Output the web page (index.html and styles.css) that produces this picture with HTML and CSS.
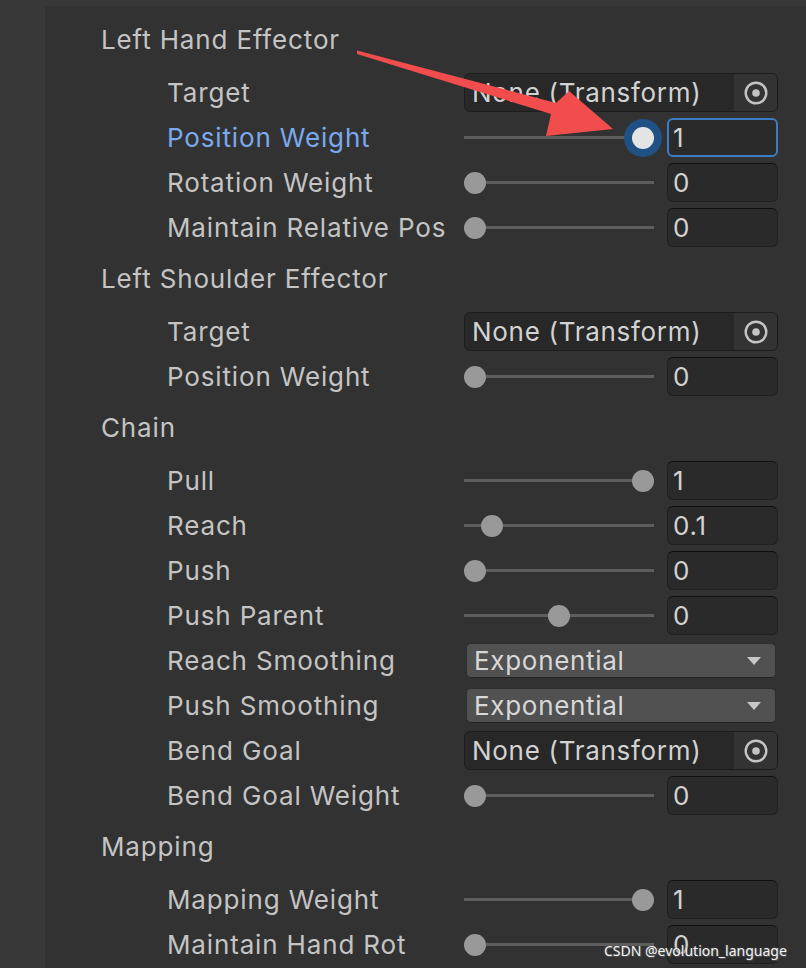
FILE: index.html
```html
<!DOCTYPE html>
<html>
<head>
<meta charset="utf-8">
<link rel="stylesheet" href="styles.css">
</head>
<body>
<div class="panel">
  <div class="section">
    <div class="header">Left Hand Effector</div>
    <div class="row">
      <div class="label">Target</div>
      <div class="objfield"><span class="objtext">None (Transform)</span><span class="objbtn"><svg width="24" height="24" viewBox="0 0 24 24"><circle cx="12" cy="12" r="10.3" fill="none" stroke="#c4c4c4" stroke-width="2.4"/><circle cx="12" cy="12" r="3.8" fill="#c4c4c4"/></svg></span></div>
    </div>
    <div class="row">
      <div class="label active">Position Weight</div>
      <div class="sliderfield"><div class="slider"><div class="track"></div><div class="knob focused" style="--v:1"></div></div><div class="numfield focused">1</div></div>
    </div>
    <div class="row">
      <div class="label">Rotation Weight</div>
      <div class="sliderfield"><div class="slider"><div class="track"></div><div class="knob" style="--v:0"></div></div><div class="numfield">0</div></div>
    </div>
    <div class="row">
      <div class="label">Maintain Relative Pos</div>
      <div class="sliderfield"><div class="slider"><div class="track"></div><div class="knob" style="--v:0"></div></div><div class="numfield">0</div></div>
    </div>
  </div>
  <div class="section">
    <div class="header">Left Shoulder Effector</div>
    <div class="row">
      <div class="label">Target</div>
      <div class="objfield"><span class="objtext">None (Transform)</span><span class="objbtn"><svg width="24" height="24" viewBox="0 0 24 24"><circle cx="12" cy="12" r="10.3" fill="none" stroke="#c4c4c4" stroke-width="2.4"/><circle cx="12" cy="12" r="3.8" fill="#c4c4c4"/></svg></span></div>
    </div>
    <div class="row">
      <div class="label">Position Weight</div>
      <div class="sliderfield"><div class="slider"><div class="track"></div><div class="knob" style="--v:0"></div></div><div class="numfield">0</div></div>
    </div>
  </div>
  <div class="section">
    <div class="header">Chain</div>
    <div class="row">
      <div class="label">Pull</div>
      <div class="sliderfield"><div class="slider"><div class="track"></div><div class="knob" style="--v:1"></div></div><div class="numfield">1</div></div>
    </div>
    <div class="row">
      <div class="label">Reach</div>
      <div class="sliderfield"><div class="slider"><div class="track"></div><div class="knob" style="--v:0.1"></div></div><div class="numfield">0.1</div></div>
    </div>
    <div class="row">
      <div class="label">Push</div>
      <div class="sliderfield"><div class="slider"><div class="track"></div><div class="knob" style="--v:0"></div></div><div class="numfield">0</div></div>
    </div>
    <div class="row">
      <div class="label">Push Parent</div>
      <div class="sliderfield"><div class="slider"><div class="track"></div><div class="knob" style="--v:0.5"></div></div><div class="numfield">0</div></div>
    </div>
    <div class="row">
      <div class="label">Reach Smoothing</div>
      <div class="dropdown"><span>Exponential</span><span class="caret"></span></div>
    </div>
    <div class="row">
      <div class="label">Push Smoothing</div>
      <div class="dropdown"><span>Exponential</span><span class="caret"></span></div>
    </div>
    <div class="row">
      <div class="label">Bend Goal</div>
      <div class="objfield"><span class="objtext">None (Transform)</span><span class="objbtn"><svg width="24" height="24" viewBox="0 0 24 24"><circle cx="12" cy="12" r="10.3" fill="none" stroke="#c4c4c4" stroke-width="2.4"/><circle cx="12" cy="12" r="3.8" fill="#c4c4c4"/></svg></span></div>
    </div>
    <div class="row">
      <div class="label">Bend Goal Weight</div>
      <div class="sliderfield"><div class="slider"><div class="track"></div><div class="knob" style="--v:0"></div></div><div class="numfield">0</div></div>
    </div>
  </div>
  <div class="section">
    <div class="header">Mapping</div>
    <div class="row">
      <div class="label">Mapping Weight</div>
      <div class="sliderfield"><div class="slider"><div class="track"></div><div class="knob" style="--v:1"></div></div><div class="numfield">1</div></div>
    </div>
    <div class="row">
      <div class="label">Maintain Hand Rot</div>
      <div class="sliderfield"><div class="slider"><div class="track"></div><div class="knob" style="--v:0"></div></div><div class="numfield">0</div></div>
    </div>
  </div>
</div>
<svg class="annotation" width="806" height="968" viewBox="0 0 806 968">
  <polygon points="357,50.5 556,103 569,91 613,129 546,136 551,114 357,54" fill="#f24d4d"/>
</svg>
<div class="watermark">CSDN @evolution_language</div>
</body>
</html>
```

FILE: styles.css
```css
html, body {
  margin: 0;
  padding: 0;
}
body {
  width: 806px;
  height: 968px;
  overflow: hidden;
  background: #383838;
  font-family: Inter, "Noto Sans", sans-serif;
  position: relative;
}
.panel {
  margin: 6px 0 0 45px;
  height: 962px;
  background: #323232;
  padding: 5px 28px 0 56px;
  box-sizing: border-box;
}
.header {
  height: 45px;
  line-height: 45px;
  margin: 6px 0 8px 0;
  font-size: 26px;
  letter-spacing: 0.85px;
  color: #c4c4c4;
  white-space: nowrap;
}
.row {
  height: 45px;
  display: grid;
  grid-template-columns: 297px 314px;
  align-items: center;
  padding-left: 66px;
}
.label {
  font-size: 26px;
  letter-spacing: 0.85px;
  color: #c4c4c4;
  white-space: nowrap;
  overflow: hidden;
}
.label.active {
  color: #7aa9ee;
}
.objfield {
  height: 39px;
  box-sizing: border-box;
  background: #282828;
  border: 1px solid #1d1d1d;
  border-radius: 6px;
  display: flex;
  align-items: stretch;
  overflow: hidden;
}
.objtext {
  flex: 1;
  font-size: 26px;
  letter-spacing: 0.7px;
  color: #d2d2d2;
  padding-left: 7px;
  line-height: 37px;
  white-space: nowrap;
  overflow: hidden;
}
.objbtn {
  width: 43px;
  flex: none;
  background: #333333;
  display: flex;
  align-items: center;
  justify-content: center;
}
.sliderfield {
  display: flex;
  align-items: center;
  gap: 13px;
}
.slider {
  position: relative;
  width: 190px;
  height: 22px;
  display: flex;
  align-items: center;
}
.track {
  width: 100%;
  height: 3px;
  background: #5e5e5e;
}
.knob {
  position: absolute;
  top: 0;
  left: calc(var(--v) * (100% - 22px));
  width: 22px;
  height: 22px;
  border-radius: 50%;
  background: #999999;
}
.knob.focused {
  background: #e4e4e4;
  box-shadow: 0 0 0 8px #1f5185;
}
.numfield {
  width: 111px;
  height: 39px;
  box-sizing: border-box;
  background: #2a2a2a;
  border: 1px solid #202020;
  border-top-color: #0f0f0f;
  border-radius: 6px;
  font-size: 26px;
  letter-spacing: 0.7px;
  color: #d2d2d2;
  line-height: 37px;
  padding-left: 5px;
}
.numfield.focused {
  border: 2px solid #3b7cc4;
  line-height: 35px;
  padding-left: 4px;
}
.dropdown {
  margin: 0 2px;
  height: 35px;
  box-sizing: border-box;
  background: #515151;
  border: 1px solid #2f2f2f;
  border-bottom-color: #232323;
  border-radius: 5px;
  display: flex;
  align-items: center;
  justify-content: space-between;
  padding: 0 14px 0 7px;
  font-size: 26px;
  letter-spacing: 0.7px;
  color: #d8d8d8;
}
.caret {
  width: 0;
  height: 0;
  border-left: 7.5px solid transparent;
  border-right: 7.5px solid transparent;
  border-top: 8px solid #c8c8c8;
}
.annotation {
  position: absolute;
  left: 0;
  top: 0;
  pointer-events: none;
}
.watermark {
  position: absolute;
  left: 604px;
  top: 941px;
  font-family: "Noto Sans", "Liberation Sans", sans-serif;
  font-size: 14px;
  color: #f2f2f2;
  text-shadow: 0 0 2px #555, 1px 1px 1px #555;
  white-space: nowrap;
}
```
